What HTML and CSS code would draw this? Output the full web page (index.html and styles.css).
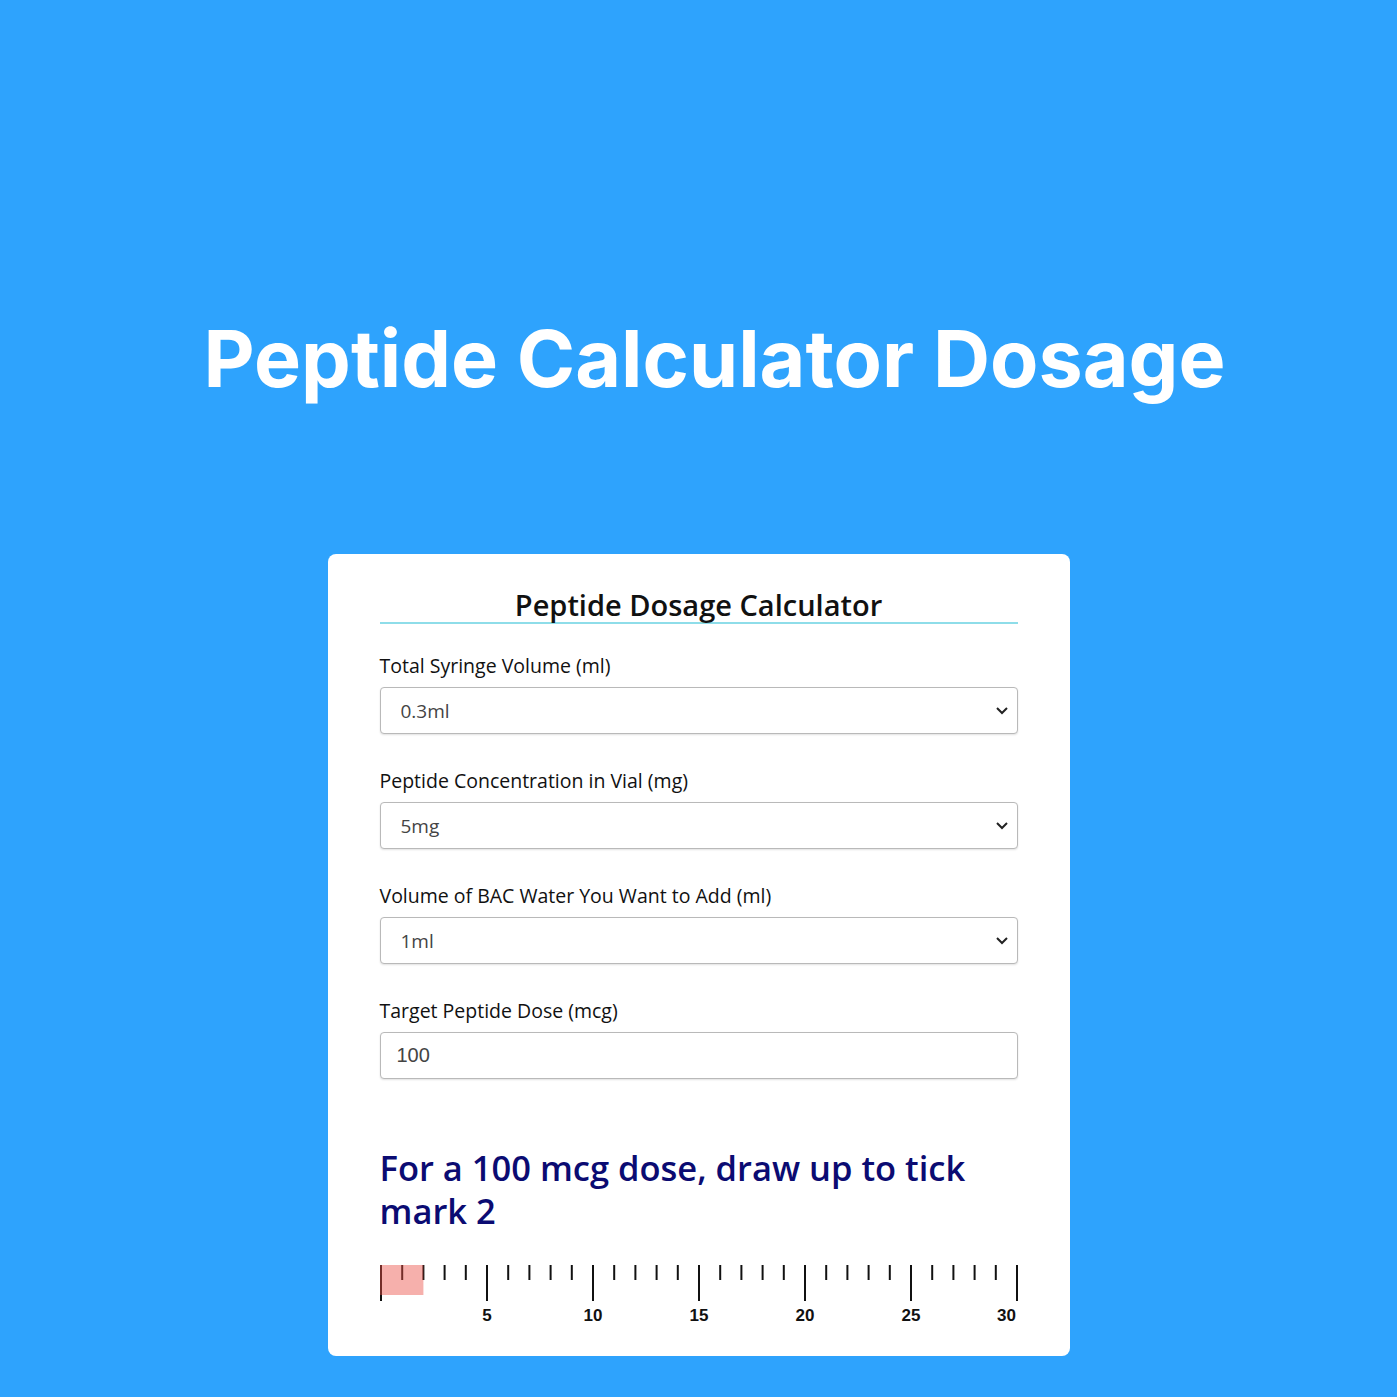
FILE: index.html
```html
<!DOCTYPE html>
<html>
<head>
    <title>Peptide Calculator Dosage</title>
    <link rel="stylesheet" href="styles.css">
</head>
<body>
    <h1 class="page-title">Peptide Calculator Dosage</h1>

    <div class="calc-card">
        <h2 class="calc-heading">Peptide Dosage Calculator</h2>

        <div class="field">
            <label for="syringe">Total Syringe Volume (ml)</label>
            <div class="select-wrap">
                <select id="syringe">
                    <option>0.3ml</option>
                    <option>0.5ml</option>
                    <option>1ml</option>
                </select>
                <svg class="chevron" width="14" height="9" viewBox="0 0 14 9"><path d="M2 2l5 5 5-5" fill="none" stroke="#222" stroke-width="2"/></svg>
            </div>
        </div>

        <div class="field">
            <label for="vial">Peptide Concentration in Vial (mg)</label>
            <div class="select-wrap">
                <select id="vial">
                    <option>5mg</option>
                    <option>10mg</option>
                </select>
                <svg class="chevron" width="14" height="9" viewBox="0 0 14 9"><path d="M2 2l5 5 5-5" fill="none" stroke="#222" stroke-width="2"/></svg>
            </div>
        </div>

        <div class="field">
            <label for="water">Volume of BAC Water You Want to Add (ml)</label>
            <div class="select-wrap">
                <select id="water">
                    <option>1ml</option>
                    <option>2ml</option>
                </select>
                <svg class="chevron" width="14" height="9" viewBox="0 0 14 9"><path d="M2 2l5 5 5-5" fill="none" stroke="#222" stroke-width="2"/></svg>
            </div>
        </div>

        <div class="field">
            <label for="dose">Target Peptide Dose (mcg)</label>
            <input type="text" id="dose" value="100">
        </div>

        <p class="result">For a 100 mcg dose, draw up to tick mark 2</p>

        <svg id="syringe-scale" class="scale" width="638" height="64"></svg>
    </div>

    <script type="text/javascript">
        // draw the 30 unit syringe scale and shade up to the dose tick
        var svg = document.getElementById("syringe-scale");
        var ns = "http://www.w3.org/2000/svg";
        var step = 636 / 30;
        var mark = 2;

        for (var i = 0; i <= 30; i++) {
            var x = 1 + i * step;
            var line = document.createElementNS(ns, "line");
            line.setAttribute("x1", x);
            line.setAttribute("x2", x);
            line.setAttribute("y1", 0);
            line.setAttribute("y2", i % 5 == 0 ? 36 : 15);
            line.setAttribute("class", "tick");
            svg.appendChild(line);

            if (i > 0 && i % 5 == 0) {
                var label = document.createElementNS(ns, "text");
                label.setAttribute("x", i == 30 ? x - 1 : x);
                label.setAttribute("y", 56);
                label.setAttribute("text-anchor", i == 30 ? "end" : "middle");
                label.setAttribute("class", "tick-label");
                label.textContent = i;
                svg.appendChild(label);
            }
        }

        var fill = document.createElementNS(ns, "rect");
        fill.setAttribute("x", 0);
        fill.setAttribute("y", 0);
        fill.setAttribute("width", 1 + mark * step);
        fill.setAttribute("height", 30);
        fill.setAttribute("class", "dose-fill");
        svg.appendChild(fill);
    </script>
</body>
</html>
```

FILE: styles.css
```css
body {
    margin: 0;
    background: #2ea3fd;
    min-height: 1397px;
}

.page-title {
    margin: 0;
    padding: 313px 0 0 32px;
    text-align: center;
    color: #fff;
    font-family: Inter, "Noto Sans", sans-serif;
    font-weight: 700;
    font-size: 79px;
    line-height: 90px;
}

.calc-card {
    width: 742px;
    box-sizing: border-box;
    margin: 151px auto 0;
    padding: 33px 52px 27px;
    background: #fff;
    border-radius: 8px;
    font-family: "Open Sans", "Noto Sans", sans-serif;
    color: #111;
}

/* heading with a thin cyan rule under it */
.calc-heading {
    margin: 0 0 30px;
    text-align: center;
    font-size: 29px;
    font-weight: 600;
    line-height: 36px;
}

.calc-heading::after {
    content: '';
    display: block;
    height: 2px;
    background: #8edde9;
    margin-top: -1px;
}

.field {
    margin-bottom: 35px;
}

.field label {
    display: block;
    font-size: 19.5px;
    line-height: 24px;
    margin-bottom: 9px;
}

.select-wrap {
    position: relative;
}

select,
input {
    display: block;
    width: 100%;
    height: 47px;
    box-sizing: border-box;
    border: 1px solid #b9b9b9;
    border-radius: 4px;
    background: #fff;
    color: #444;
    box-shadow: 0 1px 2px rgba(0, 0, 0, 0.12);
    margin: 0;
}

select {
    -webkit-appearance: none;
    appearance: none;
    padding: 0 20px;
    font-family: "Open Sans", "Noto Sans", sans-serif;
    font-size: 19px;
}

.chevron {
    position: absolute;
    right: 9px;
    top: 19px;
    pointer-events: none;
}

input {
    padding: 0 16px;
    font-family: "Liberation Sans", Arial, sans-serif;
    font-size: 20px;
}

.result {
    margin: 67px 0 33px;
    color: #0b0b72;
    font-size: 34.5px;
    font-weight: 600;
    line-height: 43px;
    padding-right: 40px;
}

.scale {
    display: block;
}

.tick {
    stroke: #111;
    stroke-width: 2;
}

.tick-label {
    font-family: "Liberation Sans", Arial, sans-serif;
    font-weight: bold;
    font-size: 17px;
    fill: #111;
}

.dose-fill {
    fill: rgba(235, 80, 70, 0.45);
}
```
